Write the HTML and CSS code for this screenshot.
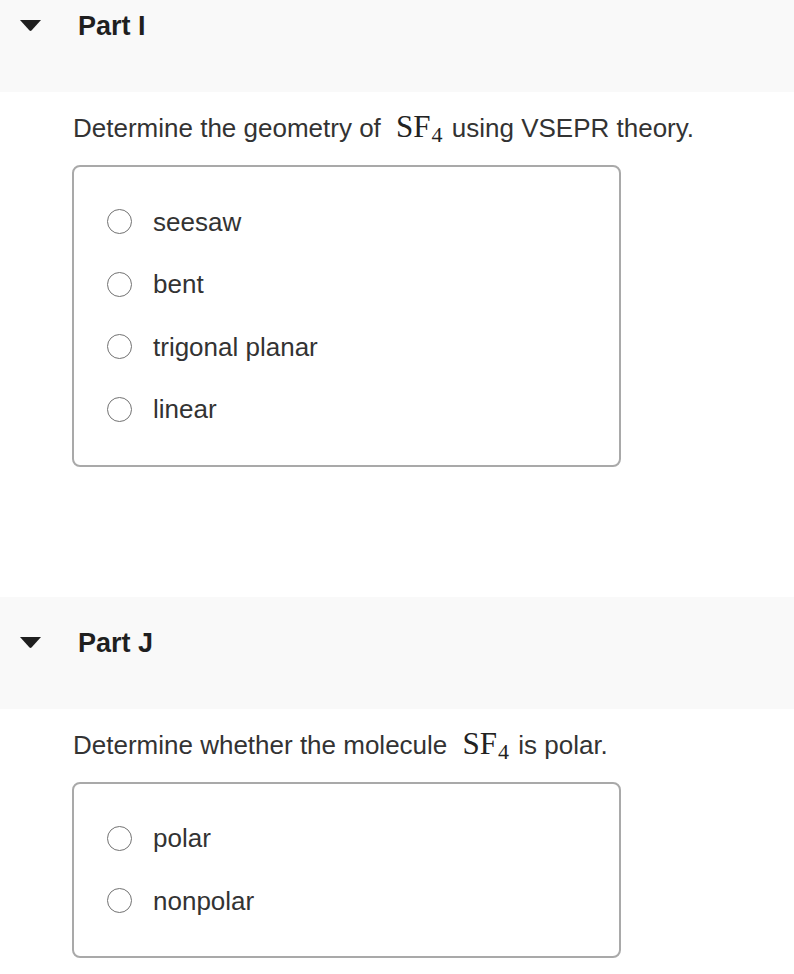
FILE: index.html
```html
<!DOCTYPE html>
<html lang="en">
<head>
<meta charset="utf-8">
<title>Parts I and J</title>
<link rel="stylesheet" href="styles.css">
</head>
<body>
<div class="page">
  <section class="part">
    <header class="part-head">
      <svg class="caret" width="21" height="11" viewBox="0 0 21 11"><path d="M0 0 H21 L11.5 10.5 Q10.5 11.4 9.5 10.5 Z" fill="#1f1f1f"/></svg>
      <h2 class="part-title">Part I</h2>
    </header>
    <div class="part-body">
      <p class="question">Determine the geometry of <span class="math">SF<sub>4</sub></span> using VSEPR theory.</p>
      <div class="choices">
        <label class="choice"><span class="radio"></span><span class="choice-text">seesaw</span></label>
        <label class="choice"><span class="radio"></span><span class="choice-text">bent</span></label>
        <label class="choice"><span class="radio"></span><span class="choice-text">trigonal planar</span></label>
        <label class="choice"><span class="radio"></span><span class="choice-text">linear</span></label>
      </div>
    </div>
  </section>
  <section class="part">
    <header class="part-head">
      <svg class="caret" width="21" height="11" viewBox="0 0 21 11"><path d="M0 0 H21 L11.5 10.5 Q10.5 11.4 9.5 10.5 Z" fill="#1f1f1f"/></svg>
      <h2 class="part-title">Part J</h2>
    </header>
    <div class="part-body">
      <p class="question">Determine whether the molecule <span class="math">SF<sub>4</sub></span> is polar.</p>
      <div class="choices">
        <label class="choice"><span class="radio"></span><span class="choice-text">polar</span></label>
        <label class="choice"><span class="radio"></span><span class="choice-text">nonpolar</span></label>
      </div>
    </div>
  </section>
</div>
</body>
</html>
```

FILE: styles.css
```css
html, body {
  margin: 0;
  padding: 0;
  background: #ffffff;
}

body {
  font-family: "Liberation Sans", Arial, Helvetica, sans-serif;
  color: #333333;
}

.page {
  margin-top: -20px;
}

.part + .part {
  margin-top: 130px;
}

.part-head {
  box-sizing: border-box;
  height: 112px;
  background: #f9f9f9;
  padding: 31px 0 0 20px;
  display: flex;
  align-items: flex-start;
}

.caret {
  display: block;
  margin-top: 9px;
  flex: none;
}

.part-title {
  margin: 0 0 0 37px;
  font-size: 27px;
  line-height: 30px;
  font-weight: bold;
  color: #1f1f1f;
}

.part-body {
  padding: 21px 0 0 73px;
}

.question {
  margin: 0;
  height: 30px;
  font-size: 26px;
  line-height: 30px;
  color: #333333;
}

.math {
  font-family: "Liberation Serif", "Times New Roman", serif;
  font-size: 31px;
  line-height: 20px;
  color: #222222;
  margin-left: 8px;
  margin-right: 2px;
  white-space: nowrap;
}

.math sub {
  font-size: 22px;
  line-height: 0;
  vertical-align: -5px;
  margin-left: 1px;
}

.choices {
  box-sizing: border-box;
  width: 549px;
  margin: 22px 0 0 -1px;
  border: 2px solid #a9a9a9;
  border-radius: 8px;
  padding: 23.5px 0 24px 33px;
  display: flex;
  flex-direction: column;
}

.choice {
  height: 62.5px;
  display: flex;
  align-items: center;
  gap: 21px;
}

.radio {
  box-sizing: border-box;
  width: 25px;
  height: 25px;
  border: 1.6px solid #727272;
  border-radius: 50%;
  background: #ffffff;
  flex: none;
}

.choice-text {
  font-size: 26px;
  line-height: 30px;
  color: #333333;
}
```
